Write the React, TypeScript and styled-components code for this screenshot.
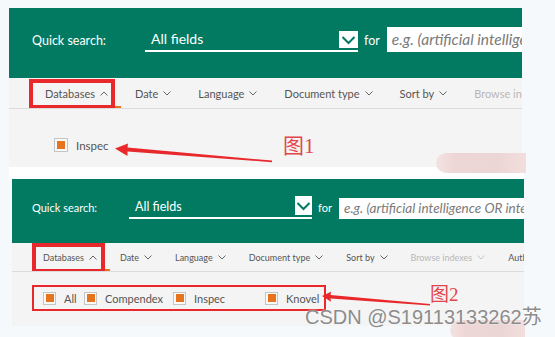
import React from 'react'
import styled, { createGlobalStyle } from 'styled-components'

const GREEN = '#027a62'
const RED = '#e8282b'
const ORANGE = '#e8731d'

type Shot = {
  left: number
  width: number
  headH: number
  headPadL: number
  headPadB: number
  labelW: number
  labelSize: number
  fieldW: number
  fieldSize: number
  boxW: number
  boxH: number
  inputH: number
  inputSize: number
  barH: number
  barPadL: number
  barSize: number
  tabGap: number
  mark: { l: number; r: number; t: number; b: number }
  bodyH: number
  bodyPadL: number
  bodyPadT: number
  check: number
  textSize: number
  boxed: boolean
  dbs: { name: string; w?: number }[]
}

const shots: Shot[] = [
  {
    left: 9,
    width: 513,
    headH: 70,
    headPadL: 23,
    headPadB: 26,
    labelW: 113,
    labelSize: 12.5,
    fieldW: 213,
    fieldSize: 14,
    boxW: 19,
    boxH: 17,
    inputH: 25,
    inputSize: 15.5,
    barH: 30,
    barPadL: 36,
    barSize: 11,
    tabGap: 27,
    mark: { l: 16, r: 7, t: 1, b: -1 },
    bodyH: 58,
    bodyPadL: 45,
    bodyPadT: 29,
    check: 14,
    textSize: 11.5,
    boxed: false,
    dbs: [{ name: 'Inspec' }]
  },
  {
    left: 12,
    width: 512,
    headH: 64,
    headPadL: 20,
    headPadB: 24,
    labelW: 97,
    labelSize: 11,
    fieldW: 183,
    fieldSize: 12.5,
    boxW: 17,
    boxH: 19,
    inputH: 21,
    inputSize: 13.5,
    barH: 28,
    barPadL: 31,
    barSize: 9,
    tabGap: 23,
    mark: { l: 11, r: 8, t: 0, b: -2 },
    bodyH: 54,
    bodyPadL: 20,
    bodyPadT: 13,
    check: 13,
    textSize: 11,
    boxed: true,
    dbs: [
      { name: 'All', w: 41 },
      { name: 'Compendex', w: 89 },
      { name: 'Inspec', w: 92 },
      { name: 'Knovel' }
    ]
  }
]

const tabs = [
  { name: 'Databases', active: true },
  { name: 'Date' },
  { name: 'Language' },
  { name: 'Document type' },
  { name: 'Sort by' },
  { name: 'Browse indexes', disabled: true },
  { name: 'Author' }
]

function Chevron({ up, color }: { up?: boolean; color: string }) {
  return (
    <svg width="8" height="5" viewBox="0 0 8 5">
      <polyline
        points={up ? '0.5,4.5 4,1 7.5,4.5' : '0.5,0.5 4,4 7.5,0.5'}
        fill="none"
        stroke={color}
        strokeWidth="1"
      />
    </svg>
  )
}

function SearchShot({ s }: { s: Shot }) {
  return (
    <Panel $left={s.left} $width={s.width}>
      <Header $h={s.headH} $pl={s.headPadL} $pb={s.headPadB}>
        <Label $w={s.labelW} $size={s.labelSize}>Quick search:</Label>
        <Field $w={s.fieldW} $size={s.fieldSize}>
          <span>All fields</span>
          <DropBox $w={s.boxW} $h={s.boxH}>
            <svg width="15" height="10" viewBox="0 0 15 10">
              <polyline points="1.5,2 7.5,8 13.5,2" fill="none" stroke={GREEN} strokeWidth="2" />
            </svg>
          </DropBox>
        </Field>
        <For $size={s.labelSize}>for</For>
        <SearchInput $h={s.inputH} $size={s.inputSize}>
          e.g. (artificial intelligence OR intelligent systems)
        </SearchInput>
      </Header>
      <Toolbar $h={s.barH} $pl={s.barPadL} $gap={s.tabGap} $size={s.barSize}>
        {tabs.map((t) => (
          <Tab key={t.name} $active={!!t.active} $disabled={!!t.disabled}>
            {t.name}
            <Chevron up={t.active} color={t.disabled ? '#c4c4c4' : '#666'} />
            {t.active && <Mark $m={s.mark} />}
          </Tab>
        ))}
      </Toolbar>
      <Body $h={s.bodyH} $pl={s.bodyPadL} $pt={s.bodyPadT}>
        <CheckRow $boxed={s.boxed}>
          {s.dbs.map((d) => (
            <CheckItem key={d.name} $w={d.w} $size={s.textSize}>
              <Box $s={s.check}>
                <Fill />
              </Box>
              {d.name}
            </CheckItem>
          ))}
        </CheckRow>
      </Body>
    </Panel>
  )
}

export default function App() {
  return (
    <Page>
      <GlobalStyle />
      <SearchShot s={shots[0]} />
      <Band />
      <SearchShot s={shots[1]} />

      <Smudge $x={436} $y={153} $w={90} $h={20} />
      <Smudge $x={450} $y={320} $w={75} $h={20} />

      <Arrows width="555" height="337" viewBox="0 0 555 337">
        <polygon
          points="115,148.5 128,143.5 127.5,147.5 272,160.6 272,162.2 127.5,151.5 127.5,156"
          fill={RED}
        />
        <polygon
          points="322,296 331,291.8 330.5,295 430,304 430,305.6 330.5,298.5 331,301.8"
          fill={RED}
        />
      </Arrows>
      <Figure $x={283} $y={136} $size={21}>图1</Figure>
      <Figure $x={430} $y={285} $size={19}>图2</Figure>
      <Watermark>CSDN @S19113133262苏</Watermark>
    </Page>
  )
}

const GlobalStyle = createGlobalStyle`
  html, body {
    margin: 0;
    background: #f6f9fc;
  }
  body {
    font-family: Lato, "Open Sans", sans-serif;
  }
`

const Page = styled.div`
  position: relative;
  width: 555px;
  height: 337px;
  padding-top: 8px;
  box-sizing: border-box;
  overflow: hidden;
  background: #f6f9fc;
`

const Panel = styled.section<{ $left: number; $width: number }>`
  margin-left: ${(p) => p.$left}px;
  width: ${(p) => p.$width}px;
  overflow: hidden;
  background: #f4f4f4;
`

const Band = styled.div`
  margin-left: 9px;
  width: 515px;
  height: 12px;
  background: #fff;
`

const Header = styled.div<{ $h: number; $pl: number; $pb: number }>`
  height: ${(p) => p.$h}px;
  box-sizing: border-box;
  padding: 0 0 ${(p) => p.$pb}px ${(p) => p.$pl}px;
  display: flex;
  align-items: flex-end;
  background: ${GREEN};
  color: #fff;
`

const Label = styled.div<{ $w: number; $size: number }>`
  flex: 0 0 ${(p) => p.$w}px;
  font-size: ${(p) => p.$size}px;
  line-height: 22px;
`

const Field = styled.div<{ $w: number; $size: number }>`
  flex: 0 0 ${(p) => p.$w}px;
  display: flex;
  align-items: flex-end;
  justify-content: space-between;
  border-bottom: 2px solid #fff;
  font-size: ${(p) => p.$size}px;

  span {
    padding: 0 0 3px 6px;
  }
`

const DropBox = styled.div<{ $w: number; $h: number }>`
  width: ${(p) => p.$w}px;
  height: ${(p) => p.$h}px;
  margin-bottom: 2px;
  background: #fff;
  display: flex;
  align-items: center;
  justify-content: center;
`

const For = styled.div<{ $size: number }>`
  margin: 0 7px 0 6px;
  font-size: ${(p) => p.$size}px;
  line-height: 22px;
`

const SearchInput = styled.div<{ $h: number; $size: number }>`
  flex: 1;
  height: ${(p) => p.$h}px;
  padding-left: 5px;
  background: #fff;
  color: #7a7a7a;
  font-style: italic;
  font-size: ${(p) => p.$size}px;
  line-height: ${(p) => p.$h}px;
  white-space: nowrap;
  overflow: hidden;
`

const Toolbar = styled.div<{ $h: number; $pl: number; $gap: number; $size: number }>`
  height: ${(p) => p.$h}px;
  padding-left: ${(p) => p.$pl}px;
  display: flex;
  gap: ${(p) => p.$gap}px;
  border-bottom: 1px solid #dcdcdc;
  font-size: ${(p) => p.$size}px;
  white-space: nowrap;
  overflow: hidden;
`

const Tab = styled.div<{ $active: boolean; $disabled: boolean }>`
  position: relative;
  display: flex;
  align-items: center;
  gap: 5px;
  color: ${(p) => (p.$disabled ? '#b8b8b8' : '#555')};
  box-shadow: ${(p) => (p.$active ? `inset 0 -2px 0 ${ORANGE}` : 'none')};
  margin: ${(p) => (p.$active ? '0 -13px 0 -10px' : '0')};
  padding: ${(p) => (p.$active ? '0 13px 0 10px' : '0')};
`

const Mark = styled.span<{ $m: { l: number; r: number; t: number; b: number } }>`
  position: absolute;
  left: ${(p) => 10 - p.$m.l}px;
  right: ${(p) => 13 - p.$m.r}px;
  top: ${(p) => p.$m.t}px;
  bottom: ${(p) => p.$m.b}px;
  border: 4px solid ${RED};
`

const Body = styled.div<{ $h: number; $pl: number; $pt: number }>`
  height: ${(p) => p.$h}px;
  box-sizing: border-box;
  padding: ${(p) => p.$pt}px 0 0 ${(p) => p.$pl}px;
`

const CheckRow = styled.div<{ $boxed: boolean }>`
  display: flex;
  align-items: center;
  box-sizing: border-box;
  width: ${(p) => (p.$boxed ? '294px' : 'auto')};
  height: ${(p) => (p.$boxed ? '26px' : 'auto')};
  padding-left: ${(p) => (p.$boxed ? '9px' : '0')};
  border: ${(p) => (p.$boxed ? `2px solid ${RED}` : 'none')};
`

const CheckItem = styled.div<{ $w?: number; $size: number }>`
  flex: 0 0 ${(p) => (p.$w ? `${p.$w}px` : 'auto')};
  display: flex;
  align-items: center;
  gap: 8px;
  font-size: ${(p) => p.$size}px;
  color: #555;
`

const Box = styled.span<{ $s: number }>`
  width: ${(p) => p.$s}px;
  height: ${(p) => p.$s}px;
  box-sizing: border-box;
  border: 1px solid #c4c4c4;
  background: #fafafa;
  display: flex;
  align-items: center;
  justify-content: center;
`

const Fill = styled.span`
  width: 8px;
  height: 8px;
  background: ${ORANGE};
`

const Smudge = styled.div<{ $x: number; $y: number; $w: number; $h: number }>`
  position: absolute;
  left: ${(p) => p.$x}px;
  top: ${(p) => p.$y}px;
  width: ${(p) => p.$w}px;
  height: ${(p) => p.$h}px;
  border-radius: 10px 0 0 10px;
  background: linear-gradient(90deg, #f3e3e3, #eed6d6 20%, #ecd5d5 70%, #f3dede);
`

const Arrows = styled.svg`
  position: absolute;
  left: 0;
  top: 0;
  pointer-events: none;
`

const Figure = styled.div<{ $x: number; $y: number; $size: number }>`
  position: absolute;
  left: ${(p) => p.$x}px;
  top: ${(p) => p.$y}px;
  font-family: "Liberation Serif", "Noto Sans CJK SC", serif;
  font-size: ${(p) => p.$size}px;
  color: #e2454a;
  line-height: 1;
`

const Watermark = styled.div`
  position: absolute;
  left: 305px;
  top: 307px;
  font-family: "Liberation Sans", "Noto Sans CJK SC", sans-serif;
  font-size: 20px;
  line-height: 1;
  color: #8c8c8c;
  text-shadow: 0 0 2px rgba(255, 255, 255, 0.9);
  white-space: nowrap;
`
